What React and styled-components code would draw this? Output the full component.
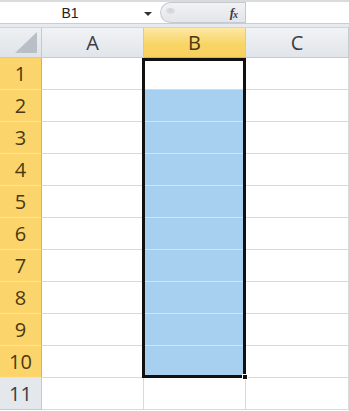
import React from "react";
import styled, { createGlobalStyle } from "styled-components";

const GlobalStyle = createGlobalStyle`
  * { box-sizing: border-box; }
  html, body { margin: 0; padding: 0; background: #ffffff; }
  body { font-family: "Open Sans", "Liberation Sans", sans-serif; overflow: hidden; }
`;

const COLUMNS = ["A", "B", "C"];
const ROWS = [1, 2, 3, 4, 5, 6, 7, 8, 9, 10, 11];

const Sheet = styled.div`
  width: 349px;
  height: 411px;
  display: flex;
  flex-direction: column;
  background: #e6e9ed;
`;

const FormulaBar = styled.div`
  height: 24px;
  display: flex;
  border-top: 2px solid #d9dcdf;
  border-bottom: 1px solid #c9ccd0;
  background: #ffffff;
`;

const NameBox = styled.div`
  width: 160px;
  display: flex;
  align-items: center;
  background: #ffffff;
  color: #222;
  font-size: 14px;
  font-family: "Liberation Sans", Arial, sans-serif;
`;

const NameText = styled.span`
  flex: 1;
  text-align: center;
  padding-right: 4px;
`;

const DropArrow = styled.span`
  flex: none;
  width: 8px;
  height: 0;
  margin: 2px 8px 0 0;
  border-left: 4px solid transparent;
  border-right: 4px solid transparent;
  border-top: 4px solid #333;
`;

const Functions = styled.div`
  width: 85px;
  display: flex;
  align-items: center;
  justify-content: flex-end;
  padding-right: 8px;
  position: relative;
  border: 1px solid #c6c9cd;
  border-right: none;
  border-radius: 11px 0 0 11px;
  background: linear-gradient(#f1f2f4, #e3e6ea);
`;

const Knob = styled.span`
  position: absolute;
  left: 5px;
  top: 5px;
  width: 9px;
  height: 6px;
  border-radius: 50%;
  background: radial-gradient(ellipse at 50% 40%, #cfd3d8 0, #dadde1 60%, #e6e8eb 100%);
`;

const Fx = styled.span`
  font-family: "Liberation Serif", "Times New Roman", serif;
  font-style: italic;
  font-weight: bold;
  font-size: 13px;
  color: #3b3b3b;
  letter-spacing: -1px;
  sub {
    font-size: 10px;
    vertical-align: -1px;
  }
`;

const FormulaInput = styled.div`
  flex: 1;
  background: #ffffff;
  border-left: 1px solid #c4c7cb;
`;

const Spacer = styled.div`
  height: 4px;
  background: #e7eaee;
  border-bottom: 1px solid #d0d4d9;
`;

const GridWrap = styled.div`
  position: relative;
  flex: 1;
  background: #ffffff;
`;

const Grid = styled.div`
  display: grid;
  grid-template-columns: 42px 102px 102px 103px;
  grid-template-rows: 30px repeat(11, 32px);
`;

const Corner = styled.div`
  display: flex;
  align-items: flex-end;
  justify-content: flex-end;
  padding: 0 4px 4px 0;
  background: linear-gradient(#eef0f2, #dfe3e8);
  border-right: 1px solid #c5cad1;
  border-bottom: 1px solid #c5cad1;
`;

const ColHead = styled.div`
  display: flex;
  align-items: center;
  justify-content: center;
  font-size: 20px;
  color: ${(p) => (p.$active ? "#4a3a12" : "#3a3d42")};
  background: ${(p) =>
    p.$active
      ? "linear-gradient(#fce8a6, #f9d565 55%, #f8d060)"
      : "linear-gradient(#f1f3f5, #e1e5ea)"};
  border-right: 1px solid #c5cad1;
  border-bottom: 1px solid ${(p) => (p.$active ? "#e2b23c" : "#c5cad1")};
`;

const RowHead = styled.div`
  display: flex;
  align-items: center;
  justify-content: center;
  font-size: 20px;
  color: ${(p) => (p.$active ? "#4a3a12" : "#3a3d42")};
  background: ${(p) => (p.$active ? "#fbd56c" : "#e4e8ed")};
  border-right: 1px solid ${(p) => (p.$active ? "#e2b23c" : "#c5cad1")};
  border-bottom: 1px solid ${(p) => (p.$active ? "#f6e4a8" : "#c5cad1")};
`;

const Cell = styled.div`
  background: ${(p) => (p.$selected ? "#a7cff0" : "#ffffff")};
  border-right: 1px solid #d9d9d9;
  border-bottom: 1px solid ${(p) => (p.$selected ? "#d3e5f5" : "#d9d9d9")};
`;

const Selection = styled.div`
  position: absolute;
  left: 142px;
  top: 30px;
  width: 104px;
  height: 320px;
  border: 3px solid #111;
  pointer-events: none;
`;

const FillHandle = styled.div`
  position: absolute;
  right: -5px;
  bottom: -5px;
  width: 6px;
  height: 6px;
  background: #111;
  border: 1px solid #ffffff;
`;

export default function App() {
  return (
    <>
      <GlobalStyle />
      <Sheet>
        <FormulaBar>
          <NameBox>
            <NameText>B1</NameText>
            <DropArrow />
          </NameBox>
          <Functions>
            <Knob />
            <Fx>
              f<sub>x</sub>
            </Fx>
          </Functions>
          <FormulaInput />
        </FormulaBar>
        <Spacer />
        <GridWrap>
          <Grid>
            <Corner>
              <svg width="22" height="21" viewBox="0 0 22 21">
                <polygon points="22,0 22,21 0,21" fill="#b9bfc7" />
              </svg>
            </Corner>
            {COLUMNS.map((c) => (
              <ColHead key={c} $active={c === "B"}>
                {c}
              </ColHead>
            ))}
            {ROWS.map((r) => (
              <React.Fragment key={r}>
                <RowHead $active={r <= 10}>{r}</RowHead>
                {COLUMNS.map((c) => (
                  <Cell key={c} $selected={c === "B" && r >= 2 && r <= 10} />
                ))}
              </React.Fragment>
            ))}
          </Grid>
          <Selection>
            <FillHandle />
          </Selection>
        </GridWrap>
      </Sheet>
    </>
  );
}
